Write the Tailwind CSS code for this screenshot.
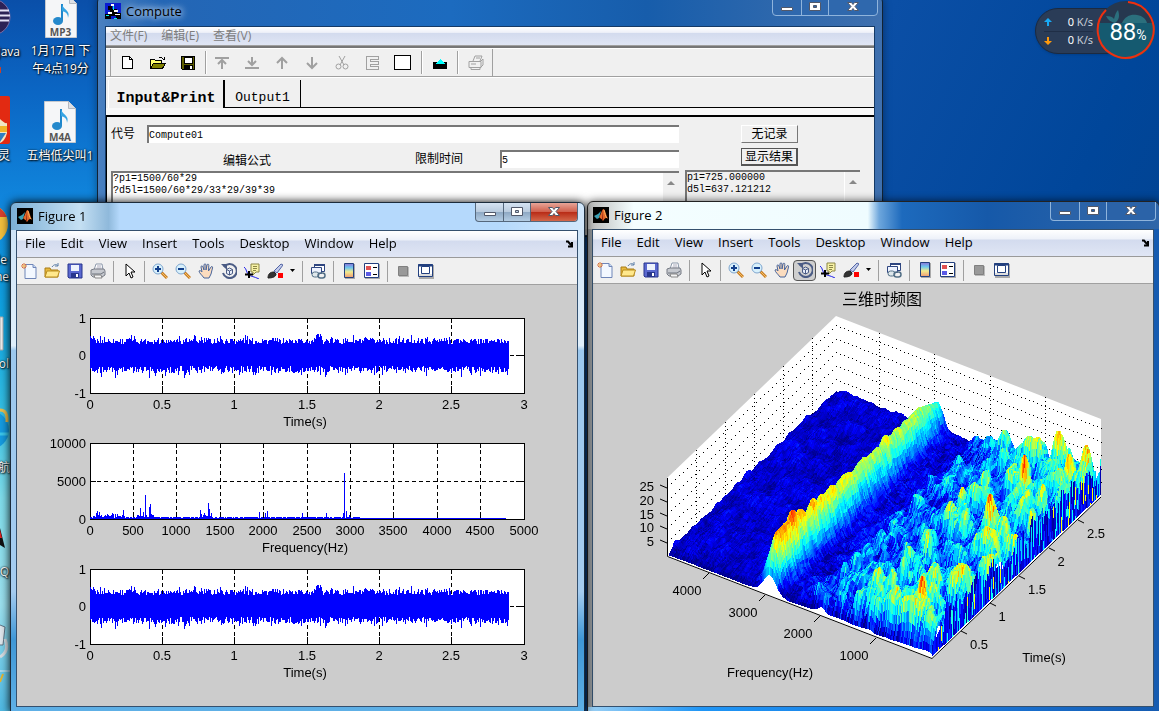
<!DOCTYPE html>
<html lang="zh-CN">
<head>
    <meta charset="UTF-8">
    <meta name="viewport" content="width=device-width, initial-scale=1.0">
    <title>Compute</title>
    <script src="https://cdn.jsdelivr.net/npm/@tailwindcss/browser@4"></script>
</head>
<body class="relative h-screen overflow-hidden bg-[linear-gradient(115deg,#0a55ae_0%,#1068c4_20%,#0b4fa6_60%,#00469a_78%,#053f86_100%)] font-['Open_Sans','Noto_Sans_CJK_SC',sans-serif] text-xs text-black">

    <!-- Shared icons -->
    <svg class="absolute size-0">
        <symbol id="i-new" viewBox="0 0 16 16"><path d="M4 1.500h8l3 3v11H4z" fill="#f3f8ff" stroke="#6f86b8"/><path d="M12 1.500v3h3" fill="#c7d8f3" stroke="#6f86b8"/><path d="M3 0v6M0 3h6M1 1l4 4M5 1L1 5" stroke="#d9713a"/><circle cx="3" cy="3" r="1" fill="#ffe27a"/></symbol>
        <symbol id="i-open" viewBox="0 0 16 16"><path d="M1 14V5h5l1 2h7v7z" fill="#e8b93c" stroke="#a87c16"/><path d="M1 14l2-6h12.500l-2 6z" fill="#ffe88c" stroke="#b98d1e"/><path d="M8 4c2-3 5-3 6-1m0 0V0m0 3h-3" fill="none" stroke="#5d7fa8"/></symbol>
        <symbol id="i-save" viewBox="0 0 16 16"><path d="M1 1h14v14H2l-1-1z" fill="#5a68cf" stroke="#27348c"/><path d="M4 2h8v6H4z" fill="#eef3fc"/><path d="M4 10h8v5H4z" fill="#28368d"/><path d="M9 11h2v3H9z" fill="#fff"/></symbol>
        <symbol id="i-print" viewBox="0 0 16 16"><path d="M4 7L6 1h6l1 6z" fill="#fff" stroke="#8d99ab"/><path d="M7 3h4M6.500 5h5" stroke="#aab"/><path d="M1 7l3-1h10l1 2v4l-3 2H3l-2-2z" fill="#c6c9cf" stroke="#767b84"/><path d="M2 11h9l3-2" fill="none" stroke="#6c727c"/><path d="M4 12h7l1 3H5z" fill="#f4f4f4" stroke="#888"/></symbol>
        <symbol id="i-arrow" viewBox="0 0 16 16"><path d="M5 1v12l3-3 2 5 2-1-2-5h4z" fill="#fff" stroke="#000"/></symbol>
        <symbol id="i-zin" viewBox="0 0 16 16"><path d="M9 9l6 6" stroke="#c97d22" stroke-width="3"/><path d="M10 10l5 5" stroke="#f2c067"/><circle cx="6" cy="6" r="5" fill="#d8f0fb" stroke="#7fa6cf"/><path d="M3 6h6M6 3v6" stroke="#123f8c" stroke-width="2"/></symbol>
        <symbol id="i-zout" viewBox="0 0 16 16"><path d="M9 9l6 6" stroke="#c97d22" stroke-width="3"/><path d="M10 10l5 5" stroke="#f2c067"/><circle cx="6" cy="6" r="5" fill="#d8f0fb" stroke="#7fa6cf"/><path d="M3 6h6" stroke="#123f8c" stroke-width="2"/></symbol>
        <symbol id="i-hand" viewBox="0 0 16 16"><path d="M6 15C4 12 1 10 1 8c1-1 2 0 3 1L3 4c0-1.500 1.500-1.500 2 0l1 3V2c0-1.500 2-1.500 2 0v5l1-5c.3-1.300 2-1 1.800.3L10.500 8 13 4c.7-1 2-.4 1.500 1L13 11l-2 4z" fill="#fbdcbf" stroke="#47659c"/></symbol>
        <symbol id="i-rot" viewBox="0 0 16 16"><path d="M3 4a7 7 0 1 1-1 6" fill="none" stroke="#4b5c85" stroke-width="2"/><path d="M0 1h6v6z" fill="#4b5c85"/><path d="M5.500 6.500l3-1.500 3 1.500v4l-3 1.500-3-1.500zM5.500 6.500l3 1.500 3-1.500M8.500 8v4" fill="#e7edf9" stroke="#4b5c85"/></symbol>
        <symbol id="i-data" viewBox="0 0 16 16"><path d="M0 4c3 2 2 6 5 8s4 1 10 4" fill="none" stroke="#2020e8"/><path d="M7 1h8v8h-3l-3 3V9H7z" fill="#f7f2a6" stroke="#8c8647"/><path d="M9 3.500h4M9 5.500h4M9 7.500h3" stroke="#8c8647"/><path d="M5 8v7M1 11.500h8" stroke="#000" stroke-width="2"/></symbol>
        <symbol id="i-brush" viewBox="0 0 16 16"><path d="M7 8l7-7 2 1-6 8z" fill="#c2cbea" stroke="#5264a4"/><path d="M1 15c0-4 2-6 6-6l2 2c0 3-4 4-8 4z" fill="#333" stroke="#222"/><path d="M11 10h5v5h-5z" fill="#f00"/></symbol>
        <symbol id="i-link" viewBox="0 0 16 16"><path d="M4.500 1.500h10v7h-10z" fill="#fff" stroke="#2f4680"/><path d="M4 2h11" stroke="#2f4680" stroke-width="2"/><path d="M1.500 4.500h10v6h-10z" fill="#eef3ff" stroke="#2f4680"/><rect x="2" y="9" width="7" height="5" rx="2.500" fill="#dfe8ec" stroke="#536f86"/><rect x="8" y="10" width="7" height="5" rx="2.500" fill="none" stroke="#536f86" stroke-width="1.500"/></symbol>
        <linearGradient id="jet" x2="0" y2="1"><stop stop-color="#8d74d8"/><stop offset=".3" stop-color="#6cc7ee"/><stop offset=".6" stop-color="#f2eb8e"/><stop offset="1" stop-color="#ee9a73"/></linearGradient>
        <symbol id="i-cbar" viewBox="0 0 16 16"><path d="M4 1h10v15H4z" fill="#aaa"/><path d="M3.500.500h9v14h-9z" fill="url(#jet)" stroke="#23407f"/></symbol>
        <symbol id="i-leg" viewBox="0 0 16 16"><path d="M1 1h15v15H1z" fill="#aaa"/><path d="M.500.500h14v14H.500z" fill="#fff" stroke="#23407f"/><path d="M2 3h5v4H2z" fill="#e05252"/><path d="M2 9h5v4H2z" fill="#5a5ae6"/><path d="M9 4.500h4M9 11.500h4" stroke="#000"/></symbol>
        <symbol id="i-grey" viewBox="0 0 16 16"><path d="M4 4h10v10H4z" fill="#bbb"/><path d="M3.500 3.500h9v9h-9z" fill="#999" stroke="#808080"/></symbol>
        <symbol id="i-dock" viewBox="0 0 16 16"><path d="M1 2h15v14H1z" fill="#aaa"/><path d="M.500 1.500h14v12H.500z" fill="#fff" stroke="#23407f"/><path d="M0 2.500h15" stroke="#23407f" stroke-width="2"/><path d="M3.500 3.500h8v7h-8z" fill="#fff" stroke="#23407f"/><path d="M1 12h13" stroke="#bbb"/></symbol>
        <symbol id="i-matlab" viewBox="0 0 16 16"><path d="M0 0h16v16H0z"/><path d="M1 9l4-2 3-3-2 7-2 1z" fill="#3da0b4"/><path d="M6 10c2-2 3-8 4.500-8S13 8 15 12c-2-2-3-1-5 2-1-2-2-2-4-4z" fill="#e0672a"/><path d="M10 3l-1 9 1 2z" fill="#8f2512"/><path d="M11 3c1 3 1 6 3 8" stroke="#ffb45c" fill="none"/></symbol>
        <symbol id="i-min" viewBox="0 0 16 16"><path d="M2.500 8.500h11v3h-11z" fill="#fff" stroke="#51586a"/></symbol>
        <symbol id="i-max" viewBox="0 0 16 16"><path d="M2.500 3.500h11v8h-11zM6.500 6.500v2h3v-2z" fill="#fff" fill-rule="evenodd" stroke="#51586a"/></symbol>
        <symbol id="i-close" viewBox="0 0 16 16"><path d="M2.500 3.500h4L8 5.500l1.500-2h4L10 7.500l3.500 4h-4L8 9.500l-1.500 2h-4l3.500-4z" fill="#fff" stroke="#51586a"/></symbol>
        <symbol id="i-file" viewBox="0 0 32 42"><path d="M.500.500h24l7 7v34H.500z" fill="#f5f6f8" stroke="#c4c8ce"/><path d="M24.500.500v7h7" fill="#dde0e5" stroke="#b5b9bf"/><path d="M17 8v17" stroke="#1d86cc" stroke-width="2"/><path d="M17 8c1 6 9 6 6 14 0-5-3-6-6-7z" fill="#35a4e3"/><ellipse cx="13" cy="25" rx="5" ry="4" fill="#2589cc"/></symbol>
    </svg>

    <!-- Menu bar and toolbar used by both figure windows -->
    <template id="figureBars">
        <nav class="flex h-[27px] items-center gap-[15px] border-b border-[#9a9a9a] bg-[linear-gradient(#fff,#edf1f9_35%,#d3dbee_38%,#e0e6f5)] pl-2 text-[13px]">
            <button>File</button><button>Edit</button><button>View</button><button>Insert</button><button>Tools</button><button>Desktop</button><button>Window</button><button>Help</button>
            <button class="mr-1 ml-auto" aria-label="Dock"><svg class="size-2" viewBox="0 0 8 8"><path d="M1 1.500h2L6 5M7 2v4.500H3" fill="none" stroke="#000" stroke-width="2"/></svg></button>
        </nav>
        <div class="flex h-[27px] items-center border-b border-[#a0a0a0] bg-[#f0f0f0]">
            <button class="flex h-6 w-[23px] items-center justify-center" aria-label="New"><svg class="size-4"><use href="#i-new"/></svg></button>
            <button class="flex h-6 w-[23px] items-center justify-center" aria-label="Open"><svg class="size-4"><use href="#i-open"/></svg></button>
            <button class="flex h-6 w-[23px] items-center justify-center" aria-label="Save"><svg class="size-4"><use href="#i-save"/></svg></button>
            <button class="flex h-6 w-[23px] items-center justify-center" aria-label="Print"><svg class="size-4"><use href="#i-print"/></svg></button>
            <div class="flex h-[21px] w-2 justify-center"><i class="w-px bg-[#a0a0a0]"></i></div>
            <button class="flex h-6 w-[23px] items-center justify-center" aria-label="Select"><svg class="size-4"><use href="#i-arrow"/></svg></button>
            <div class="flex h-[21px] w-2 justify-center"><i class="w-px bg-[#a0a0a0]"></i></div>
            <button class="flex h-6 w-[23px] items-center justify-center" aria-label="Zoom in"><svg class="size-4"><use href="#i-zin"/></svg></button>
            <button class="flex h-6 w-[23px] items-center justify-center" aria-label="Zoom out"><svg class="size-4"><use href="#i-zout"/></svg></button>
            <button class="flex h-6 w-[23px] items-center justify-center" aria-label="Pan"><svg class="size-4"><use href="#i-hand"/></svg></button>
            <button class="rotate3d flex h-[21px] w-[23px] items-center justify-center rounded-sm aria-pressed:border aria-pressed:border-[#555] aria-pressed:bg-[#cfcfcf]" aria-label="Rotate 3D"><svg class="size-4"><use href="#i-rot"/></svg></button>
            <button class="flex h-6 w-[23px] items-center justify-center" aria-label="Data cursor"><svg class="size-4"><use href="#i-data"/></svg></button>
            <button class="flex h-6 w-[23px] items-center justify-center" aria-label="Brush"><svg class="size-4"><use href="#i-brush"/></svg></button>
            <button class="flex h-6 w-3 items-center justify-center" aria-label="Brush colour"><svg class="h-1 w-[5px]" viewBox="0 0 5 4"><path d="M0 0h5L2.500 3z"/></svg></button>
            <div class="flex h-[21px] w-2 justify-center"><i class="w-px bg-[#a0a0a0]"></i></div>
            <button class="flex h-6 w-[23px] items-center justify-center" aria-label="Link plot"><svg class="size-4"><use href="#i-link"/></svg></button>
            <div class="flex h-[21px] w-2 justify-center"><i class="w-px bg-[#a0a0a0]"></i></div>
            <button class="flex h-6 w-[23px] items-center justify-center" aria-label="Colorbar"><svg class="size-4"><use href="#i-cbar"/></svg></button>
            <button class="flex h-6 w-[23px] items-center justify-center" aria-label="Legend"><svg class="size-4"><use href="#i-leg"/></svg></button>
            <div class="flex h-[21px] w-2 justify-center"><i class="w-px bg-[#a0a0a0]"></i></div>
            <button class="flex h-6 w-[23px] items-center justify-center" aria-label="Hide plot tools"><svg class="size-4"><use href="#i-grey"/></svg></button>
            <button class="flex h-6 w-[23px] items-center justify-center" aria-label="Show plot tools"><svg class="size-4"><use href="#i-dock"/></svg></button>
        </div>
    </template>

    <!-- Desktop, left strip -->
    <div class="absolute inset-y-0 left-0 w-[110px] overflow-hidden bg-[linear-gradient(#0a4fa9_0%,#0b66c4_13%,#1085dc_28%,#0fa4e0_45%,#35bfe3_58%,#7fdcea_70%,#9be0ee_85%,#4fb9e3_100%)] whitespace-nowrap text-white [text-shadow:1px_1px_2px_#000,0_0_2px_#000]">
        <svg class="absolute inset-0 h-[711px] w-[110px]" viewBox="0 0 110 711">
            <circle cx="-8" cy="17" r="18" fill="#2c2255" stroke="#7a6ea8"/>
            <path d="M0 10.500h9M0 15.500h10M0 20.500h9" stroke="#e5e2f5" stroke-width="2"/>
            <path d="M0 96h8q2 0 2 2v44q0 2-2 2H0z" fill="#e22a12"/>
            <path d="M0 119q5 5 7 4v10q-2 8-7 10z" fill="#f0e6c4"/><path d="M0 126h7v6H0z" fill="#f0b429"/><path d="M0 133h6l-6 9z" fill="#2f7fc2"/>
            <circle cx="-12" cy="224" r="20" fill="#f1bf3c"/><path d="M0 208q5 4 7 9H0z" fill="#d7402f"/>
            <path d="M0 317h3v33H0z" fill="#eee" stroke="#aaa"/>
            <circle cx="-10" cy="430" r="19" fill="#159be0"/><path d="M0 410q8 0 7 12" fill="none" stroke="#e8bf4f" stroke-width="3"/><path d="M0 434h9" stroke="#3bc6ea" stroke-width="3"/>
            <path d="M0 528l5 20-5-3z" fill="#111"/><path d="M0 530l2 8H0z" fill="#d22"/>
            <path d="M0 625l5 2-2 18H0" fill="#dfe6ec" stroke="#5f7485"/><path d="M0 657q10-6 5-18" fill="none" stroke="#d6dde3" stroke-width="3"/>
            <path d="M0 671h10" stroke="#e8eef2"/><path d="M0 682l3-8" stroke="#e8b52c" stroke-width="2"/>
            <path d="M0 67h1v6H0z" fill="#c8402a"/>
        </svg>
        <span class="absolute top-11 right-[90px] leading-4">Java</span>
        <span class="absolute top-[148px] right-[100px] leading-4">灵</span>
        <span class="absolute top-[252px] right-[103px] leading-4">Google</span>
        <span class="absolute top-[269px] right-[101px] leading-4">Chrome</span>
        <span class="absolute top-[356px] right-[101px] leading-4">Tool</span>
        <span class="absolute top-[460px] right-[100px] leading-4">导航</span>
        <span class="absolute top-[564px] right-[101px] leading-4">QQ</span>
        <div class="absolute -top-1 left-[25px] flex w-[71px] flex-col items-center">
            <div class="relative"><svg class="h-[42px] w-8"><use href="#i-file"/></svg><b class="absolute inset-x-0 bottom-0 text-center text-[10px] leading-3 text-[#555] [text-shadow:none]">MP3</b></div>
            <span class="mt-1 text-center leading-[18px]">1月17日 下<br>午4点19分</span>
        </div>
        <div class="absolute top-[101px] left-[20px] flex w-20 flex-col items-center">
            <div class="relative"><svg class="h-[42px] w-8"><use href="#i-file"/></svg><b class="absolute inset-x-0 bottom-0 text-center text-[10px] leading-3 text-[#555] [text-shadow:none]">M4A</b></div>
            <span class="mt-1 leading-[18px]">五档低尖叫1</span>
        </div>
    </div>

    <!-- Network / memory gadget -->
    <div class="absolute top-2 right-[49px] flex h-[46px] w-[75px] flex-col justify-center rounded-l-full border border-[#1c2a40] bg-[#2a3c57] pr-4 pl-2 font-['Noto_Sans'] text-[11px] text-white shadow">
        <div class="flex h-[18px] items-center justify-between"><svg class="size-2" viewBox="0 0 8 8"><path d="M4 0l4 4H5v4H3V4H0z" fill="#18a9f5"/></svg><span>0<span class="text-[#c6ccd6]"> K/s</span></span></div>
        <div class="flex h-[18px] items-center justify-between border-t border-[#1f2e46]"><svg class="size-2" viewBox="0 0 8 8"><path d="M4 8l4-4H5V0H3v4H0z" fill="#ff9a0c"/></svg><span>0<span class="text-[#c6ccd6]"> K/s</span></span></div>
    </div>
    <div class="absolute top-0 right-[3px] flex size-[60px] items-center justify-center">
        <svg class="absolute inset-0 size-[60px]" viewBox="0 0 60 60">
            <circle cx="30" cy="30" r="29" fill="#26384f"/><path d="M2 23h56a29 29 0 1 1-56 0z" fill="#155a70"/>
            <path d="M26 23c3-7 9-9 15-8s9 4 10 8zM10 16c4 0 7 1 8 3 1-4 2-7 4-9 2 6 1 10-3 13-4-1-7-3-9-7z" fill="#2b6f7d"/>
            <path d="M32 2a28 28 0 1 1-22 8" fill="none" stroke="#ee3010" stroke-width="2"/>
        </svg>
        <span class="relative pt-1 pl-1 font-['Roboto'] text-2xl text-white">88<span class="text-sm">%</span></span>
    </div>

    <!-- Compute window -->
    <section class="absolute -top-1 left-[97px] w-[786px] rounded-md border border-[#123] bg-[linear-gradient(90deg,#4a80c0,#2466b5_8%,#1c6bbf_45%,#175dab_70%,#3f70ae)] px-[7px] shadow-[0_0_8px_#0006]">
        <header class="flex h-[29px] items-start">
            <svg class="mt-[6px] size-4" viewBox="0 0 16 16" shape-rendering="crispEdges"><path d="M0 0h16v16H0z" fill="#0a1ad0"/><path d="M3 3h4v3h5v4h4v6h-5v-3H6v3H0v-5h5V7H3z"/><path d="M6 1h3v2H6zM9 7h4v2H9zM3 9h4v2H3zM10 11h5v1h-5z" fill="#fff"/><path d="M8 3v4M1 12h3M9 15h3" stroke="#0ee"/></svg>
            <h1 class="mt-[5px] ml-[5px] text-[13px] leading-[18px] [text-shadow:0_0_8px_#fff,0_0_6px_#cde]">Compute</h1>
            <div class="-mr-[3px] ml-auto flex h-[19px] overflow-hidden rounded-b border border-[#8fb4dc] bg-[#2f68ad]">
                <button class="flex w-[29px] items-center justify-center border-r border-[#8fb4dc]" aria-label="Minimize"><svg class="size-4"><use href="#i-min"/></svg></button>
                <button class="flex w-[27px] items-center justify-center border-r border-[#8fb4dc]" aria-label="Maximize"><svg class="size-4"><use href="#i-max"/></svg></button>
                <button class="flex w-12 items-center justify-center" aria-label="Close"><svg class="size-4"><use href="#i-close"/></svg></button>
            </div>
        </header>
        <div class="h-[210px] border border-[#153a66] bg-[#f0f0f0]">
            <nav class="flex h-[18px] items-center gap-[14px] bg-[linear-gradient(#fff,#eef1f9_30%,#d3dbee_36%,#e0e6f5)] pl-1 text-[#7d7d7d]"><button>文件(F)</button><button>编辑(E)</button><button>查看(V)</button></nav>
            <div class="h-1 border-y border-t-[#a0a0a0] border-b-white bg-[#777]"></div>
            <!-- toolbar -->
            <div class="flex h-7 items-center border-b border-[#a0a0a0] pl-1">
                <i class="mr-[2px] h-7 w-px bg-[#a0a0a0]"></i>
                <button class="flex w-[30px] justify-center" aria-label="New"><svg class="size-4" viewBox="0 0 16 16" shape-rendering="crispEdges"><path d="M2.500 1.500h7l3 3v9h-10z" fill="#fff" stroke="#000"/><path d="M9.500 1.500v3h3" fill="none" stroke="#000"/></svg></button>
                <button class="flex w-[30px] justify-center" aria-label="Open"><svg class="size-4" viewBox="0 0 16 16" shape-rendering="crispEdges"><path d="M.500 13.500v-9h4l1 1h6v3" fill="#ffff70" stroke="#000"/><path d="M.500 13.500l3-5h12l-3 5z" fill="#808000" stroke="#000"/><path d="M9 2.500h2l3 2v-3" fill="none" stroke="#000"/></svg></button>
                <button class="flex w-[30px] justify-center" aria-label="Save"><svg class="size-4" viewBox="0 0 16 16" shape-rendering="crispEdges"><path d="M1.500 1.500h13v13h-12l-1-1z" fill="#606000" stroke="#000"/><path d="M4 2h8v6H4z" fill="#fff" stroke="#000"/><path d="M4 10h9v4H4z"/><path d="M10 11h2v3h-2z" fill="#fff"/></svg></button>
                <i class="ml-[2px] h-[23px] w-[2px] border-r border-white bg-[#a0a0a0]"></i>
                <button class="flex w-[30px] justify-center" aria-label="First"><svg class="size-4" viewBox="0 0 16 16"><path d="M1 3h14M8 14V5M4 9l4-4 4 4" fill="none" stroke="#a0a0a0" stroke-width="2"/></svg></button>
                <button class="flex w-[30px] justify-center" aria-label="Last"><svg class="size-4" viewBox="0 0 16 16"><path d="M1 13h14M8 2v8M4 6l4 4 4-4" fill="none" stroke="#a0a0a0" stroke-width="2"/></svg></button>
                <button class="flex w-[30px] justify-center" aria-label="Up"><svg class="size-4" viewBox="0 0 16 16"><path d="M8 14V3M3 8l5-5 5 5" fill="none" stroke="#a0a0a0" stroke-width="2"/></svg></button>
                <button class="flex w-[30px] justify-center" aria-label="Down"><svg class="size-4" viewBox="0 0 16 16"><path d="M8 2v11M3 8l5 5 5-5" fill="none" stroke="#a0a0a0" stroke-width="2"/></svg></button>
                <button class="flex w-[30px] justify-center" aria-label="Cut"><svg class="size-4" viewBox="0 0 16 16"><path d="M5 1l5 9M11 1l-5 9" stroke="#a0a0a0"/><circle cx="4.500" cy="11.500" r="2.500" fill="none" stroke="#a0a0a0"/><circle cx="11.500" cy="11.500" r="2.500" fill="none" stroke="#a0a0a0"/></svg></button>
                <button class="flex w-[30px] justify-center" aria-label="List"><svg class="size-4" viewBox="0 0 16 16" shape-rendering="crispEdges"><path d="M2.500 1.500h12v3h-8v2h8v3h-8v2h8v3h-12z" fill="none" stroke="#a0a0a0"/></svg></button>
                <button class="flex w-[30px] justify-center" aria-label="Frame"><i class="h-[15px] w-[17px] border border-black bg-white"></i></button>
                <i class="ml-1 h-[23px] w-[2px] border-r border-white bg-[#a0a0a0]"></i>
                <button class="flex w-[34px] justify-center" aria-label="Eject"><svg class="size-4" viewBox="0 0 16 16" shape-rendering="crispEdges"><path d="M1 7h14v7H1z"/><path d="M8 4l5 5H3z" fill="#0ff"/></svg></button>
                <i class="h-[23px] w-[2px] border-r border-white bg-[#a0a0a0]"></i>
                <button class="flex w-[33px] justify-center" aria-label="Print"><svg class="size-4" viewBox="0 0 16 16"><path d="M5 6l2-5h7l-2 5M1 6.500h12v6H1zM3 12.500h9v2H3zM13 6l2-2v6l-2 2M8 3h4M3 9h5" fill="none" stroke="#a0a0a0"/></svg></button>
                <i class="h-[27px] w-px bg-[#a0a0a0]"></i>
            </div>
            <!-- tabs -->
            <div class="flex h-[31px] items-end border-t border-white pl-[2px] font-['Liberation_Mono',monospace]">
                <button class="h-7 w-[115px] border-l border-white pt-[9px] text-[15px] leading-[18px] font-bold">Input&amp;Print</button>
                <button class="h-7 w-[78px] border-r border-b border-l-2 border-black pt-[9px] text-[13px] leading-[18px]">Output1</button>
                <i class="flex-1 border-b border-black"></i>
            </div>
            <div class="h-[7px] bg-[#f8f8f8]"></div>
            <!-- form -->
            <div class="flex gap-[6px] border-t-2 border-l border-black pt-[8px] pl-1">
                <div class="w-[568px]">
                    <div class="flex items-center gap-3">
                        <label for="code" class="leading-[18px]">代号</label>
                        <input id="code" value="Compute01" class="h-[18px] min-w-0 flex-1 border-t-2 border-l-2 border-[#777] bg-white font-['Liberation_Mono',monospace] text-[10px]">
                    </div>
                    <div class="mt-[6px] flex items-center">
                        <label for="formula" class="w-[304px] pt-1 pl-28">编辑公式</label>
                        <label for="limit" class="w-[85px]">限制时间</label>
                        <input id="limit" value="5" class="h-[18px] min-w-0 flex-1 border-t-2 border-l-2 border-[#777] bg-white font-['Liberation_Mono',monospace] text-[10px]">
                    </div>
                    <div class="mt-[2px] flex border-t-2 border-l-2 border-[#777] bg-white">
                        <textarea id="formula" class="h-14 flex-1 resize-none overflow-hidden font-['Liberation_Mono',monospace] text-[10px] leading-3">?p1=1500/60*29
?d5l=1500/60*29/33*29/39*39</textarea>
                        <div class="flex w-4 justify-center bg-[#f0f0f0] pt-2"><svg class="h-1 w-2" viewBox="0 0 8 4"><path d="M4 0l4 4H0z" fill="#888"/></svg></div>
                    </div>
                </div>
                <div class="flex w-[175px] flex-col items-center">
                    <button class="mr-[6px] h-[18px] w-[57px] border border-white border-r-[#777] border-b-[#777] leading-4">无记录</button>
                    <button class="mt-[5px] mr-[6px] h-[18px] w-[57px] border border-r-2 border-b-2 border-[#555] leading-[15px]">显示结果</button>
                    <div class="mt-1 flex w-full border-t-2 border-l-2 border-[#777]">
                        <textarea aria-label="结果" class="h-14 min-w-0 flex-1 resize-none overflow-hidden font-['Liberation_Mono',monospace] text-[10px] leading-3">p1=725.000000
d5l=637.121212</textarea>
                        <div class="flex w-4 justify-center border-l border-white pt-2"><svg class="h-1 w-2" viewBox="0 0 8 4"><path d="M4 0l4 4H0z" fill="#888"/></svg></div>
                    </div>
                </div>
            </div>
        </div>
    </section>

    <!-- Figure 2 -->
    <section class="absolute top-[201px] left-[587px] w-[573px] rounded-t-md border border-[#222] bg-[linear-gradient(90deg,#b9b9b9_0,#f4feff_8%,#effcff_49%,#6da6dc_51%,#1d6abd_55%,#1659a9_70%,#2f66a8_100%)] pr-[5px] shadow-[0_0_8px_#000a]">
        <header class="flex h-[27px] items-start pl-[5px]">
            <svg class="mt-[5px] size-4"><use href="#i-matlab"/></svg>
            <h2 class="mt-1 ml-[5px] text-[13px] leading-[18px]">Figure 2</h2>
            <div class="-mr-[2px] ml-auto flex h-[19px] overflow-hidden rounded-b border border-t-0 border-[#8fb4dc] bg-[#2b63a8]">
                <button class="flex w-[29px] items-center justify-center border-r border-[#8fb4dc]" aria-label="Minimize"><svg class="size-4"><use href="#i-min"/></svg></button>
                <button class="flex w-[27px] items-center justify-center border-r border-[#8fb4dc]" aria-label="Maximize"><svg class="size-4"><use href="#i-max"/></svg></button>
                <button class="flex w-12 items-center justify-center" aria-label="Close"><svg class="size-4"><use href="#i-close"/></svg></button>
            </div>
        </header>
        <div class="-mr-[5px] bg-[linear-gradient(90deg,#9bd0f4,#1f95f5_20%,#1a7be0_60%,#155bb0)] pr-[5px] pb-[5px]">
            <div class="border-l-4 border-[#8f9396]">
                <div class="border border-[#34506e] bg-[#ccc]">
                    <div id="bars2"></div>
                    <div class="relative">
                        <canvas id="surface" width="560" height="422" class="block w-full"></canvas>
                        <svg id="axes3d" class="absolute inset-0 h-full w-full font-['Liberation_Sans','Noto_Sans_CJK_SC',sans-serif] text-[13px]" viewBox="593 284 560 422"></svg>
                    </div>
                </div>
            </div>
        </div>
    </section>

    <!-- Figure 1 -->
    <section class="absolute top-[202px] left-[10px] w-[575px] rounded-t-md border border-[#1b2b3b] bg-[linear-gradient(90deg,#7cafd6_0,#c5e0f3_12%,#8fb9db_17%,#b5d9fc_19%,#b5d9fc_85%,#d2e7fb_100%)] shadow-[0_0_10px_#000]">
        <header class="flex h-[27px] items-start px-[6px]">
            <svg class="mt-[5px] size-4"><use href="#i-matlab"/></svg>
            <h2 class="mt-1 ml-[5px] text-[13px] leading-[18px]">Figure 1</h2>
            <div class="ml-auto flex h-[19px] overflow-hidden rounded-b border border-t-0 border-[#54677c] bg-[linear-gradient(#d5e3f2,#b9cbde_48%,#8fa9c4_52%,#b4cde4)]">
                <button class="flex w-[28px] items-center justify-center border-r border-[#54677c]" aria-label="Minimize"><svg class="size-4"><use href="#i-min"/></svg></button>
                <button class="flex w-[27px] items-center justify-center border-r border-[#54677c]" aria-label="Maximize"><svg class="size-4"><use href="#i-max"/></svg></button>
                <button class="flex w-[46px] items-center justify-center bg-[linear-gradient(#e7a598,#d0604d_48%,#b92c17_52%,#d3674a)]" aria-label="Close"><svg class="size-4"><use href="#i-close"/></svg></button>
            </div>
        </header>
        <div class="bg-[linear-gradient(#cfe4f7,#e0effb_24%,#9cc8ee_25%,#a5ccf0_75%,#3f97d6_85%,#5fb0e6)] pr-[6px] pb-[5px] pl-[5px]">
            <div class="border border-[#34506e] bg-[#ccc]">
                <div id="bars1"></div>
                <svg id="plots" class="block w-full font-['Liberation_Sans',sans-serif] text-[13px]" viewBox="17 285 560 421"></svg>
            </div>
        </div>
    </section>

    <script>
        for (const id of ['bars1', 'bars2']) {
            document.getElementById(id).append(document.getElementById('figureBars').content.cloneNode(true));
        }
        document.querySelector('#bars2 .rotate3d').setAttribute('aria-pressed', 'true');

        // Repeatable pseudo random value in 0..1
        function hash(a, b) {
            const s = Math.sin(a * 127.1 + b * 311.7) * 43758.5453;
            return s - Math.floor(s);
        }

        // ---- Figure 1 ----
        const text = (x, y, s, anchor = 'middle') => `<text x="${x}" y="${y}" text-anchor="${anchor}">${s}</text>`;

        function frame(top, bottom, xs, mid, extra) {
            let d = '';
            for (const x of xs) d += `M${x}.5 ${top}V${bottom}`;
            let ticks = '';
            for (const x of xs) ticks += `M${x}.5 ${bottom}v-7M${x}.5 ${top}v5`;
            return `<rect x="90.5" y="${top + 0.5}" width="434" height="${bottom - top}" fill="#fff" stroke="#000"/>
                <path d="${d}M90 ${mid}.5H524" stroke="#000" stroke-dasharray="4 3" fill="none"/>
                <path d="${ticks}M524 ${mid}.5h-8M91 ${mid}.5h5" stroke="#000"/>
                ${extra}`;
        }

        function wave(mid) {
            let d = '';
            for (let x = 90; x < 509; x++) {
                let up = 11 + hash(x, 1) * 6 + (hash(x, 2) > 0.88 ? 3 : 0);
                let down = 11 + hash(x, 3) * 7 + (hash(x, 4) > 0.9 ? 5 : 0);
                if (x > 314 && x < 323) up += 4;
                if (x < 94) up += 3;
                d += `M${x}.5 ${(mid - up).toFixed(0)}V${(mid + down).toFixed(0)}`;
            }
            return `<path d="${d}" stroke="#00f"/>`;
        }

        function spectrum() {
            const peaks = {97: 8, 99: 7, 123: 9, 140: 11, 143: 7, 145: 24, 149: 12, 150: 15, 200: 9, 204: 6, 208: 16, 209: 10, 211: 6, 259: 7, 265: 6, 267: 8, 302: 6, 326: 6, 343: 6, 344: 46, 346: 8, 349: 4};
            let d = '';
            for (let x = 90; x < 506; x++) {
                let h = 1.2 + (x < 360 ? hash(x, 9) * 1.2 : 0);
                if (x > 92 && x < 125 || x > 136 && x < 154 || x > 200 && x < 212) h += hash(x, 8) * 4;
                d += `M${x}.5 519v-${Math.round(peaks[x] || h)}`;
            }
            return `<path d="${d}" stroke="#00f"/>`;
        }

        const secs = [162, 234, 307, 379, 451];
        const hz = [133, 176, 220, 263, 307, 350, 393, 437, 480];
        let out = '<g shape-rendering="crispEdges">'
            + frame(318, 393, secs, 355, wave(355))
            + frame(443, 519, hz, 481, spectrum())
            + frame(569, 644, secs, 606, wave(606)) + '</g>';
        [90, ...secs, 524].forEach((x, i) => {
            out += text(x, 409, i / 2) + text(x, 660, i / 2);
        });
        [90, ...hz, 524].forEach((x, i) => { out += text(x, 535, i * 500); });
        for (const [y, s] of [[323, 1], [360, 0], [398, -1], [448, 10000], [486, 5000], [524, 0], [574, 1], [611, 0], [649, -1]]) {
            out += text(86, y, s, 'end');
        }
        out += text(305, 426, 'Time(s)') + text(305, 552, 'Frequency(Hz)') + text(305, 677, 'Time(s)');
        document.getElementById('plots').innerHTML = out;

        // ---- Figure 2 ----
        const NF = 265, NT = 169;
        const ctx = document.getElementById('surface').getContext('2d');
        ctx.translate(-593, -284);

        function poly(color, pts) {
            ctx.fillStyle = color;
            ctx.beginPath();
            pts.forEach(p => ctx.lineTo(p[0], p[1]));
            ctx.fill();
        }
        poly('#fff', [[667, 478], [836, 316], [1101, 419], [1101, 497], [932, 659], [667, 557]]);

        function dots(x1, y1, x2, y2) {
            const n = Math.round(Math.max(Math.abs(x2 - x1), Math.abs(y2 - y1)) / 4);
            ctx.fillStyle = '#000';
            for (let k = 0; k <= n; k++) {
                ctx.fillRect(Math.round(x1 + (x2 - x1) * k / n), Math.round(y1 + (y2 - y1) * k / n), 1, 1);
            }
        }
        for (let k = 0; k < 5; k++) {
            const z = 487 + k * 13.6;
            dots(667, z, 836, z - 162);
            dots(836, z - 162, 1101, z - 59);
        }
        for (let k = 1; k < 6; k++) dots(667 + k * 29, 478 - k * 28, 667 + k * 29, 557 - k * 28);
        for (const x of [879, 934, 990, 1045]) dots(x, 316 + (x - 836) * 0.389, x, 395 + (x - 836) * 0.389);

        function noise(x, y, seed) {
            const xi = Math.floor(x), yi = Math.floor(y);
            let u = x - xi, v = y - yi;
            u = u * u * (3 - 2 * u);
            v = v * v * (3 - 2 * v);
            const a = hash(xi + seed, yi), b = hash(xi + 1 + seed, yi);
            const c = hash(xi + seed, yi + 1), d = hash(xi + 1 + seed, yi + 1);
            return a + (b - a) * u + (c - a) * v + (a - b - c + d) * u * v;
        }

        function lerp(table, x) {
            for (let k = 1; k < table.length; k++) {
                if (x <= table[k][0]) {
                    const [x0, y0] = table[k - 1], [x1, y1] = table[k];
                    return y0 + (y1 - y0) * (x - x0) / (x1 - x0);
                }
            }
            return table[table.length - 1][1];
        }
        const level = [[0, 36], [15, 40], [35, 38], [45, 28], [58, 36], [72, 36], [84, 22], [100, 22], [112, 24], [128, 10], [145, 6], [265, 6]];
        const ridge = [[0, 18], [3, 34], [8, 46], [18, 50], [22, 58], [26, 50], [40, 45], [66, 42], [130, 37], [160, 32], [168, 24]];
        const spikes = [[35, 93, 30], [40, 164, 30], [15, 152, 26], [40, 132, 24], [25, 15, 24], [46, 10, 16], [72, 9, 14], [111, 3, 10], [5, 160, 20], [90, 160, 16]];

        function height(i, j) {
            let h = lerp(level, i) * (0.2 + 0.9 * Math.pow(noise(i / 8, j / 6, 3), 1.4));
            h += noise(i / 3, j / 4, 50) * (i < 125 ? 6 : 2.5);
            h *= Math.min(1, 0.1 + j / 6);
            h += 2;
            const dx = i - 163;
            h += lerp(ridge, j) * Math.exp(-dx * dx / 80) * (0.9 + 0.16 * noise(j / 4, 1, 7));
            for (const [si, sj, a] of spikes) {
                const di = i - si, dj = j - sj;
                h += a * Math.exp(-di * di / 24 - dj * dj / 14);
            }
            return Math.min(h, 64);
        }

        function jet(v) {
            const c = s => Math.round(255 * Math.max(0, Math.min(1, 1.5 - Math.abs(4 * v - s))));
            return `rgb(${c(3)},${c(2)},${c(1)})`;
        }

        const H = [];
        for (let i = 0; i < NF; i++) {
            H.push([]);
            for (let j = 0; j < NT; j++) H[i].push(height(i, j));
        }
        const sy = (i, j) => 658 - i * 0.385 - j * 0.958 - H[i][j];
        for (let j = NT - 1; j > 0; j--) {
            for (let i = NF - 1; i > 0; i--) {
                const ys = [sy(i, j), sy(i - 1, j), sy(i, j - 1), sy(i - 1, j - 1)];
                const y0 = Math.round(Math.min(...ys)), y1 = Math.round(Math.max(...ys)) + 1;
                const streak = (hash(i, j >> 2) - 0.5) * (i < 125 ? 0.2 : 0.07) + (hash(i >> 2, j) - 0.5) * (i < 180 ? 0.1 : 0.05);
                ctx.fillStyle = jet(Math.max(0.01, H[i][j] / 78 - 0.01 + streak));
                ctx.fillRect(932 - i + j, y0, 1, y1 - y0);
            }
        }
        // Zero-frequency edge: broken stripes, one column per time step
        for (let j = 0; j < NT; j++) {
            const base = Math.round(657 - j * 0.958);
            let y = base - Math.round((16 + 24 * noise(j / 5, 0, 21) + hash(j, 5) * 10) * Math.min(1, 0.4 + j / 15));
            for (let k = 0; y < base - 1; k++) {
                const r = hash(j * 5 + k, 77);
                const len = 6 + Math.round(hash(j, k + 30) * 22);
                ctx.fillStyle = jet(r < 0.72 ? 0.02 + r * 0.24 : r < 0.95 ? 0.28 + (r - 0.72) * 0.6 : 0.62);
                ctx.fillRect(932 + j, y, 1, Math.min(len, base - 1 - y));
                y += len;
            }
        }

        let ax = '<path d="M667.5 478V556.500L932 658.500L1101 497" fill="none" stroke="#000"/>';
        let d = '';
        [[486, 25], [500, 20], [514, 15], [527, 10], [541, 5]].forEach(([y, s]) => {
            d += `M667 ${y + 2}l-7-3`;
            ax += text(654, y + 5, s, 'end');
        });
        [[709, 573, 4000], [765, 595, 3000], [820, 616, 2000], [876, 638, 1000]].forEach(([x, y, s]) => {
            d += `M${x} ${y}l-6 6`;
            ax += text(x - 22, y + 22, s);
        });
        [[961, 631, 0.5], [990, 603, 1], [1019, 576, 1.5], [1049, 548, 2], [1078, 520, 2.5]].forEach(([x, y, s]) => {
            d += `M${x} ${y}l6 3`;
            ax += text(x + (s % 1 ? 18 : 12), y + 18, s);
        });
        ax += `<path d="${d}" stroke="#000"/>` + text(770, 677, 'Frequency(Hz)') + text(1044, 662, 'Time(s)');
        ax += '<text x="882" y="305" text-anchor="middle" class="text-base">三维时频图</text>';
        document.getElementById('axes3d').innerHTML = ax;
    </script>
</body>
</html>
